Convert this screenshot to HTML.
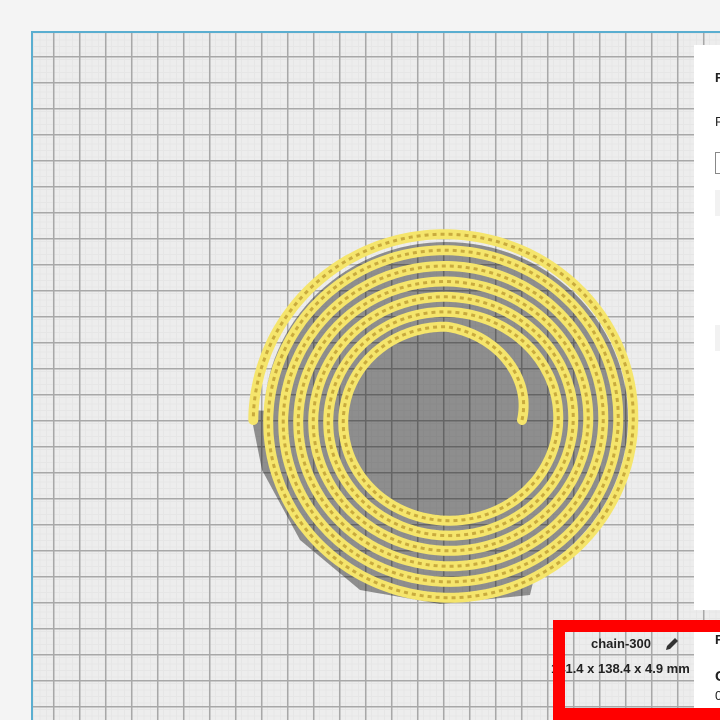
<!DOCTYPE html>
<html><head><meta charset="utf-8"><style>
html,body{margin:0;padding:0;}
body{width:720px;height:720px;overflow:hidden;background:#f4f4f4;position:relative;font-family:"Liberation Sans",sans-serif;}
.bed{position:absolute;left:31px;top:31px;width:689px;height:689px;background-color:#ededed;
background-image:linear-gradient(#a8a8a8 1.5px,transparent 1.5px),linear-gradient(90deg,#a8a8a8 1.5px,transparent 1.5px),linear-gradient(#e6e6e6 1px,transparent 1px),linear-gradient(90deg,#e6e6e6 1px,transparent 1px);
background-size:26px 26px,26px 26px,6.5px 6.5px,6.5px 6.5px;background-position:-2px 23px,-6px 0,0 0,0 0;border-top:2px solid #5aaed0;border-left:2px solid #5aaed0;box-sizing:border-box;}
.panel{position:absolute;left:694px;top:45px;width:26px;height:565px;background:#fff;}
.panel2{position:absolute;left:694px;top:628px;width:26px;height:92px;background:#fff;}
.t{position:absolute;font-weight:bold;font-size:13px;color:#222;}
.red{position:absolute;left:553px;top:620px;width:200px;height:76px;border:12px solid #f00;}
</style></head><body>
<div class="bed"></div>
<svg id="s" width="720" height="720" style="position:absolute;left:0;top:0">
<g fill="#000" fill-opacity="0.4">
<path d="M250,410 L262,470 L300,540 L360,590 L440,604 L530,595 L560,470 L450,420 Z M628,418 A182,176 0 1,0 264,418 A182,176 0 1,0 628,418 Z" fill-rule="nonzero"/>
</g>
<path id="p1" fill="none" stroke="#f5e56c" stroke-width="10" stroke-linecap="round"/>
<path id="p2" fill="none" stroke="#c9ab3e" stroke-width="3" stroke-dasharray="4 4"/>
</svg>
<script>
var d="",cx=447,cy=420;
for(var i=0;i<=1600;i++){var t=i/1600*13*Math.PI;var tr=t/(2*Math.PI);
var r=tr<0.25?75+25*(tr/0.25):100+15*(tr-0.25);
var k=0.92+0.06*Math.min(1,(r-75)/120);
var x=cx+r*Math.cos(-t),y=cy+r*k*Math.sin(-t);
d+=(i?"L":"M")+x.toFixed(1)+","+y.toFixed(1);}
document.getElementById("p1").setAttribute("d",d);
document.getElementById("p2").setAttribute("d",d);
</script>
<div class="panel"></div>
<div class="t" style="left:715px;top:70px">F</div>
<div class="t" style="left:715px;top:114px;font-weight:normal">F</div>
<div style="position:absolute;left:715px;top:152px;width:10px;height:20px;border:1px solid #888"></div>
<div style="position:absolute;left:715px;top:190px;width:10px;height:26px;background:#f2f2f2"></div>
<div style="position:absolute;left:715px;top:325px;width:10px;height:26px;background:#f2f2f2"></div>
<div class="panel2"></div>
<div class="t" style="left:715px;top:632px">F</div>
<div class="t" style="left:715px;top:668px;font-size:15px">C</div>
<div class="t" style="left:715px;top:688px;font-weight:normal">0</div>
<div class="t" style="left:591px;top:636px">chain-300</div>
<svg style="position:absolute;left:664px;top:636px" width="16" height="16" viewBox="0 0 16 16"><path d="M2,14 L3,10 L11,2 L14,5 L6,13 Z" fill="#333"/></svg>
<div class="t" style="left:551px;top:661px">141.4 x 138.4 x 4.9 mm</div>
<div class="red"></div>
</body></html>
